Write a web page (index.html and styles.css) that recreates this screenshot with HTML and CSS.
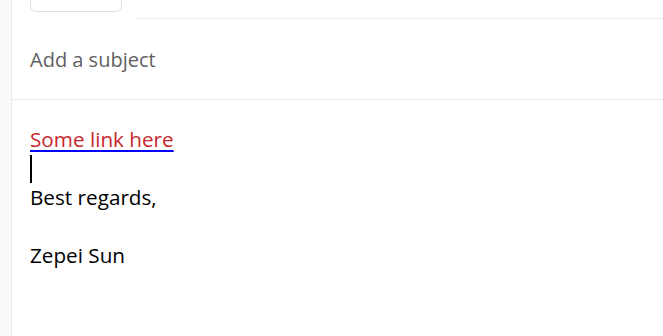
FILE: index.html
```html
<!DOCTYPE html>
<html lang="en">
<head>
<meta charset="utf-8">
<title>Compose</title>
<link rel="stylesheet" href="styles.css">
</head>
<body>
<div class="app">
  <aside class="rail"></aside>
  <main class="compose">
    <div class="top-row">
      <div class="tab-button"></div>
      <div class="top-line"></div>
    </div>
    <div class="subject">Add a subject</div>
    <div class="editor">
      <div class="line"><a class="link" href="#">Some link here</a></div>
      <div class="line"><span class="caret"></span></div>
      <div class="line">Best regards,</div>
      <div class="line">&nbsp;</div>
      <div class="line">Zepei Sun</div>
    </div>
  </main>
</div>
</body>
</html>
```

FILE: styles.css
```css
html, body {
  margin: 0;
  padding: 0;
  background: #ffffff;
  width: 663px;
  height: 336px;
  overflow: hidden;
}

.app {
  display: flex;
  height: 336px;
}

.rail {
  width: 11px;
  flex: none;
  background: #faf9f8;
  border-right: 1px solid #edebe9;
}

.compose {
  flex: 1;
  display: flex;
  flex-direction: column;
  min-width: 0;
}

.top-row {
  display: flex;
  align-items: flex-end;
  height: 19px;
  flex: none;
}

.tab-button {
  width: 90px;
  height: 30px;
  margin-left: 18px;
  align-self: flex-start;
  margin-top: -20px;
  border: 1px solid #e1dfdd;
  border-radius: 6px;
  background: #ffffff;
  flex: none;
}

.top-line {
  flex: 1;
  margin-left: 14px;
  height: 0;
  border-bottom: 1px solid #edebe9;
}

.subject {
  flex: none;
  height: 81px;
  box-sizing: border-box;
  padding: 27px 0 0 18px;
  border-bottom: 1px solid #edebe9;
  font-family: "Open Sans", "Noto Sans", sans-serif;
  font-size: 20px;
  line-height: 28px;
  color: #616161;
}

.editor {
  padding: 25px 18px 0 18px;
  font-family: "Open Sans", "Noto Sans", sans-serif;
  font-size: 20.7px;
  line-height: 29px;
  color: #000000;
}

.line {
  height: 29px;
  white-space: nowrap;
}

.link {
  color: #c8272e;
  text-decoration: underline;
  text-decoration-color: #0000ff;
  text-decoration-thickness: 2px;
  text-underline-offset: 3px;
}

.caret {
  display: inline-block;
  width: 2px;
  height: 28px;
  background: #000000;
  vertical-align: top;
  margin-top: 1px;
}
```
